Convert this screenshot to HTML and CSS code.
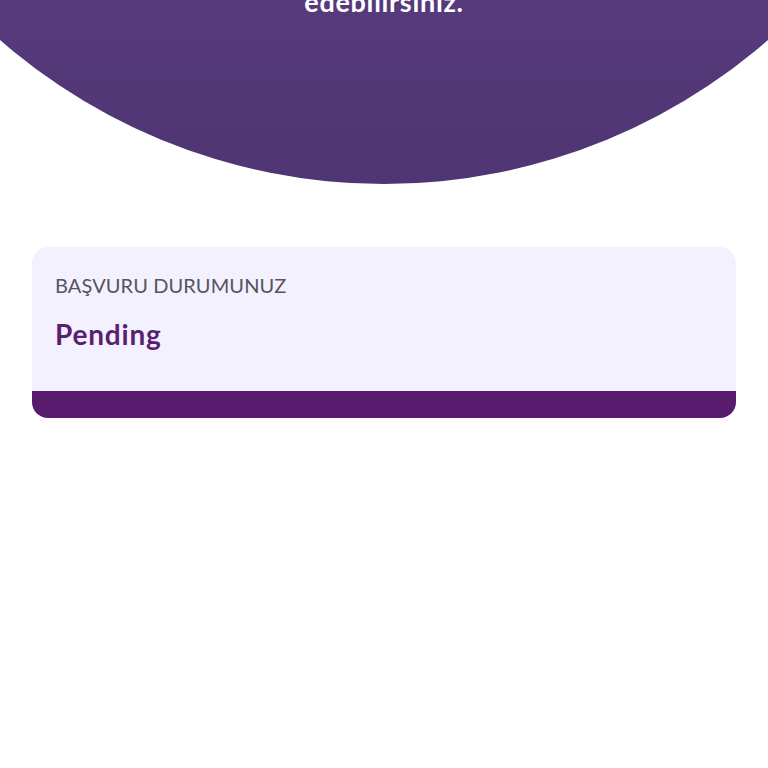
FILE: index.html
```html
<!DOCTYPE html>
<html lang="tr">
<head>
  <meta charset="UTF-8" />
  <meta name="viewport" content="width=device-width, initial-scale=1.0" />
  <title>Başvuru Durumu</title>
  <link rel="stylesheet" href="styles.css">
</head>
<body>
  <div class="hero">
    <h1 class="hero-title">Başvurunuzun durumunu buradan<br>edebilirsiniz.</h1>
  </div>

  <div class="status-card">
    <div class="status-body">
      <div class="status-label">BAŞVURU DURUMUNUZ</div>
      <div class="status-value">Pending</div>
    </div>
    <div class="status-bar"></div>
  </div>
</body>
</html>
```

FILE: styles.css
```css
body {
  margin: 0;
  font-family: Lato, "Open Sans", sans-serif;
  background: #fff;
  overflow: hidden;
}

.hero {
  height: 184px;
  background: linear-gradient(#573a7c, #4e3573);
  clip-path: circle(584px at 50% -400px);
  text-align: center;
  overflow: hidden;
}

.hero-title {
  margin: -46px 0 0;
  font-size: 27px;
  line-height: 32px;
  font-weight: 700;
  color: #fff;
  letter-spacing: 0.7px;
}

.status-card {
  margin: 63px 32px 0;
  border-radius: 16px;
  overflow: hidden;
  background: #f4f1fe;
}

.status-body {
  height: 144px;
  padding: 26px 23px 0;
  box-sizing: border-box;
}

.status-label {
  font-size: 20px;
  color: #57535f;
  letter-spacing: 0.1px;
}

.status-value {
  margin-top: 20px;
  font-size: 28px;
  font-weight: 700;
  color: #5a1f70;
  letter-spacing: 0.8px;
}

.status-bar {
  height: 27px;
  background: #581b6e;
}
```
